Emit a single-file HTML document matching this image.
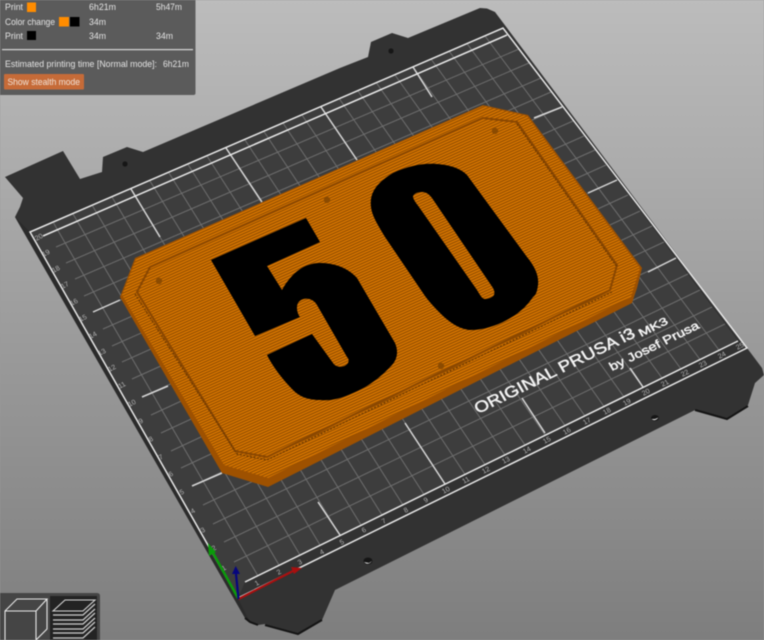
<!DOCTYPE html>
<html><head><meta charset="utf-8"><title>Prusa preview</title>
<style>
html,body{margin:0;padding:0;width:764px;height:640px;overflow:hidden;background:#999}
svg{display:block;filter:blur(.4px)}
.p text{font-family:"Liberation Sans",sans-serif;font-size:9.5px;fill:#e4e4e4}
.n text{font-family:"Liberation Sans",sans-serif;font-size:7px;fill:#b4b4b4;text-anchor:middle}
.l text{font-family:"Liberation Sans",sans-serif;fill:#f4f4f4;stroke:#f4f4f4;stroke-width:.45}
</style></head><body>
<svg width="764" height="640" viewBox="0 0 764 640" xmlns="http://www.w3.org/2000/svg">
<defs>
<linearGradient id="bg" x1="0" y1="0" x2="0" y2="1"><stop offset="0" stop-color="#bcbcbc"/><stop offset="1" stop-color="#7e7e7e"/></linearGradient>
<pattern id="st" width="5" height="2.6" patternUnits="userSpaceOnUse" patternTransform="rotate(-24)">
<rect width="5" height="2.6" fill="#d87600"/><rect width="5" height="1.100" fill="#8f4c00"/></pattern>
</defs>
<rect width="764" height="640" fill="url(#bg)"/>

<!-- bed -->
<path d="M5 177L63 151L80 179L102 172L103 157L127 147L143 152L340 68L368 57L371 42L392 33L408 38L480 8L487 8.5L495 12L762 368L764 375L755 383L748 405L727 418L695 410L335 590L322 620L298 633L265 624L258 625L250 622L245 618L15 217L20 207L23 198Z" fill="#323232"/>
<path d="M15 217L245 618L250 622L238 598L30 232Z" fill="#2b2b2b"/>
<path d="M695 410L727 419L748 406M265 625L298 634L322 620M245 618L250 622L258 625" fill="none" stroke="#141414" stroke-width="2"/>
<path d="M30 232L503 28L738 341L245 582L238 598Z" fill="#3d3d3d"/>

<!-- grid -->
<path fill="none" stroke="#6e6e6e" stroke-width="1" d="M53.6 223L258 576M73 214L279 565M92.6 206L300 555M112 197L320 545M131 189L340 535.5M150 181L361 525M169 173L382 515M188 164.5L403 505M207 156L424 494.5M226 148L445 484M245 140L465 474.4M264 131.6L485 464.6M283 123L505 455M302 115L525 445M321 107L545 435M339.5 99L565 425.5M358 91L585 416M376.5 83L604 406.5M395 75L624 397M413 67L643 387.5M431 59L662 378M449 51L681 369M467 43.6L700 359.5M485 36L719 350
M234 562L725 324M224 542L712 307M213 524L700 290M203 505L688 274M192 486L676 258M181 468L664 242M171 451L652 226M161 433L640 211M151 415L628 195M142 397L617 180M132 379L606 165M122 362L595 150M112 346L584 136M103 329L573 121M93 312L562 107M84 296L551 92M75 279L541 78M66 263L529 63M56 247L519 49"/>
<!-- thick ticks -->
<path fill="none" stroke="#d6d6d6" stroke-width="1.500" d="M131 189L160 237M318 502L340 535M226 148L262 202M405 423L445 484M321 107L357 160M522 398L545 433M413 67L432 97M630 368L643 387M93 312L120 300M534 118L562 107M142 397L168 386M588 193L617 180M192 486L222 473M648 272L676 258"/>
<!-- frame -->
<path fill="none" stroke="#e8e8e8" stroke-width="1.500" d="M238 598L30 232L503 28L747 348L238 598M43 236L507 35M245 582L738 341"/>

<!-- holes -->
<circle cx="125" cy="164" r="2.600" fill="#161616"/><circle cx="391" cy="51" r="2.600" fill="#161616"/>
<ellipse cx="368" cy="561" rx="4.500" ry="3.500" fill="#151515"/><path d="M364 562Q368 566 372 561L369 563Z" fill="#e0e0e0"/>
<ellipse cx="655" cy="418" rx="4" ry="3" fill="#151515"/><path d="M651.500 419Q655 422 658.500 417.500L655 419Z" fill="#e0e0e0"/>

<!-- numbers -->
<g class="n">
<text transform="matrix(.9 -.44 .5 .86 258 585)">1</text><text transform="matrix(.9 -.44 .5 .86 280 574)">2</text><text transform="matrix(.9 -.44 .5 .86 301 564)">3</text><text transform="matrix(.9 -.44 .5 .86 323 554)">4</text><text transform="matrix(.9 -.44 .5 .86 343 544)">5</text><text transform="matrix(.9 -.44 .5 .86 365 532)">6</text><text transform="matrix(.9 -.44 .5 .86 385 523)">7</text><text transform="matrix(.9 -.44 .5 .86 407 512)">8</text><text transform="matrix(.9 -.44 .5 .86 427 502)">9</text><text transform="matrix(.9 -.44 .5 .86 447 492)">10</text><text transform="matrix(.9 -.44 .5 .86 467 482)">11</text><text transform="matrix(.9 -.44 .5 .86 487 472)">12</text><text transform="matrix(.9 -.44 .5 .86 507 462)">13</text><text transform="matrix(.9 -.44 .5 .86 528 452)">14</text><text transform="matrix(.9 -.44 .5 .86 548 442)">15</text><text transform="matrix(.9 -.44 .5 .86 568 433)">16</text><text transform="matrix(.9 -.44 .5 .86 588 423)">17</text><text transform="matrix(.9 -.44 .5 .86 608 413)">18</text><text transform="matrix(.9 -.44 .5 .86 628 404)">19</text><text transform="matrix(.9 -.44 .5 .86 647 394)">20</text><text transform="matrix(.9 -.44 .5 .86 666 385)">21</text><text transform="matrix(.9 -.44 .5 .86 686 375)">22</text><text transform="matrix(.9 -.44 .5 .86 704 366)">23</text><text transform="matrix(.9 -.44 .5 .86 723 357)">24</text><text transform="matrix(.9 -.44 .5 .86 741 348)">25</text>
<text transform="matrix(.9 -.44 .5 .86 225 570)">1</text><text transform="matrix(.9 -.44 .5 .86 215 550)">2</text><text transform="matrix(.9 -.44 .5 .86 204 532)">3</text><text transform="matrix(.9 -.44 .5 .86 194 513)">4</text><text transform="matrix(.9 -.44 .5 .86 183 494)">5</text><text transform="matrix(.9 -.44 .5 .86 172 476)">6</text><text transform="matrix(.9 -.44 .5 .86 162 459)">7</text><text transform="matrix(.9 -.44 .5 .86 152 441)">8</text><text transform="matrix(.9 -.44 .5 .86 142 423)">9</text><text transform="matrix(.9 -.44 .5 .86 133 405)">10</text><text transform="matrix(.9 -.44 .5 .86 123 387)">11</text><text transform="matrix(.9 -.44 .5 .86 113 370)">12</text><text transform="matrix(.9 -.44 .5 .86 103 354)">13</text><text transform="matrix(.9 -.44 .5 .86 94 337)">14</text><text transform="matrix(.9 -.44 .5 .86 84 320)">15</text><text transform="matrix(.9 -.44 .5 .86 75 304)">16</text><text transform="matrix(.9 -.44 .5 .86 66 287)">17</text><text transform="matrix(.9 -.44 .5 .86 57 271)">18</text><text transform="matrix(.9 -.44 .5 .86 47 255)">19</text><text transform="matrix(.9 -.44 .5 .86 40 239)">20</text>
</g>

<!-- logo -->
<g class="l">
<text transform="matrix(.9 -.44 .5 .86 478 414)" font-size="16" textLength="176" lengthAdjust="spacingAndGlyphs">ORIGINAL PRUSA i3</text>
<text transform="matrix(.9 -.44 .5 .86 641 337)" font-size="11" textLength="31" lengthAdjust="spacingAndGlyphs">MK3</text>
<text transform="matrix(.9 -.44 .5 .86 612 371)" font-size="12" textLength="98" lengthAdjust="spacingAndGlyphs">by Josef Prusa</text>
</g>

<!-- model -->
<path d="M120 297L135 258L483 105L528 115L642 268L637 288L632 303L268 487L222 473Z" fill="#9e5100"/>
<path d="M122 295L136 259L483 106L527 116L640 268L631 297L268 478L224 465Z" fill="url(#st)"/>
<path d="M137 292L150 267L483 118L517 122L617 265L610 290L267 457L235 451Z" fill="none" stroke="#8a4700" stroke-width="2"/>
<path d="M135 294L237 454L267 460L612 292M517 124L617 267" fill="none" stroke="#6f3a00" stroke-width="1.300" stroke-dasharray="2 1.500"/>

<circle cx="159" cy="281" r="3.200" fill="#8c4b00"/><circle cx="327" cy="200" r="3.200" fill="#8c4b00"/><circle cx="495" cy="131" r="3.200" fill="#8c4b00"/><circle cx="441" cy="366" r="3.200" fill="#8c4b00"/>

<!-- 5 -->
<path d="M211 260L306 218L320 242L267 266L282 290C292 272 305 263 320 263C335 263 348 268 357 278L395 343C399 352 397 361 390 367C378 380 365 388 353 393C340 399 330 401 320 400C308 400 300 397 293 390C283 380 273 367 267 355L312 334L333 363C336 368 345 368 348 363C349 361 349 359 347 357L317 305C313 298 303 296 298 303C296 307 297 313 300 317L255 336Z" fill="#000"/>
<!-- 0 -->
<path fill-rule="evenodd" d="M371 207C369 192 378 182 393 173C410 165 425 163 437 164C450 165 460 168 467 175L527 257C536 268 539 277 538 285C537 292 536 295 533 297C525 309 515 316 503 322C490 328 480 330 470 330C458 329 448 321 440 313C432 305 428 300 425 296L385 237C376 222 372 215 371 207ZM413 197C414 201 417 204 419 207L477 290C480 295 482 299 485 299C489 299 493 297 494 295C495 292 494 290 493 288L432 198C429 194 426 192 422 192C417 192 413 194 413 197Z" fill="#000"/>

<!-- axes -->
<path d="M238 598L212 551" stroke="#0b9a0b" stroke-width="2.500" fill="none"/><path d="M208 543L216 552L209 556Z" fill="#0b9a0b"/>
<path d="M238.500 599L293 571" stroke="#a80f0f" stroke-width="2.200" fill="none"/><path d="M302 568L291 567L294 574Z" fill="#a80f0f"/>
<path d="M238.500 599L236 574" stroke="#06067e" stroke-width="2.200" fill="none"/><path d="M235.700 566L232 574L240 574Z" fill="#06067e"/>

<!-- toolbar -->
<path d="M0 593H97Q100 593 100 596V640H0Z" fill="#454545"/>
<rect x="50" y="596" width="47" height="44" fill="#232323"/>
<path d="M5 640V611H36V640M5 611L17 599H47L36 611M47 599V629L36 640" fill="none" stroke="#e8e8e8" stroke-width="1.100"/>
<path d="M53 611L65 600H95L83 611Z" fill="none" stroke="#d8d8d8" stroke-width="1.100"/>
<path d="M53 615H83L95 604M53 620H83L95 609M53 624H83L95 613M53 629H83L95 618M53 633H83L95 622M53 638H83L95 627" fill="none" stroke="#cfcfcf" stroke-width="1.200"/>

<!-- panel -->
<rect x="-4" y="-4" width="199.500" height="99" rx="2" fill="#5b5b5b"/>
<g class="p">
<text x="5" y="10" textLength="18" lengthAdjust="spacingAndGlyphs">Print</text>
<text x="89" y="10" textLength="27" lengthAdjust="spacingAndGlyphs">6h21m</text>
<text x="156" y="10" textLength="26" lengthAdjust="spacingAndGlyphs">5h47m</text>
<text x="5" y="25" textLength="50" lengthAdjust="spacingAndGlyphs">Color change</text>
<text x="89" y="25" textLength="17" lengthAdjust="spacingAndGlyphs">34m</text>
<text x="5" y="39" textLength="18" lengthAdjust="spacingAndGlyphs">Print</text>
<text x="89" y="39" textLength="17" lengthAdjust="spacingAndGlyphs">34m</text>
<text x="156" y="39" textLength="17" lengthAdjust="spacingAndGlyphs">34m</text>
<text x="5" y="67" textLength="152" lengthAdjust="spacingAndGlyphs">Estimated printing time [Normal mode]:</text>
<text x="163" y="67" textLength="26" lengthAdjust="spacingAndGlyphs">6h21m</text>
</g>
<rect x="27" y="2.500" width="9" height="9.500" fill="#ff8c00"/>
<rect x="59" y="17" width="10" height="9.500" fill="#ff8c00"/>
<rect x="70" y="17" width="9.500" height="9.500" fill="#000"/>
<rect x="27" y="31" width="9" height="9" fill="#000"/>
<rect x="2" y="49" width="191" height="1.200" fill="#d8d8d8"/>
<rect x="4" y="74" width="80" height="15.500" rx="1" fill="#c66b38"/>
<g class="p"><text x="7.500" y="85" textLength="72.500" lengthAdjust="spacingAndGlyphs" style="fill:#f1e3d8">Show stealth mode</text></g>
</svg>
</body></html>
